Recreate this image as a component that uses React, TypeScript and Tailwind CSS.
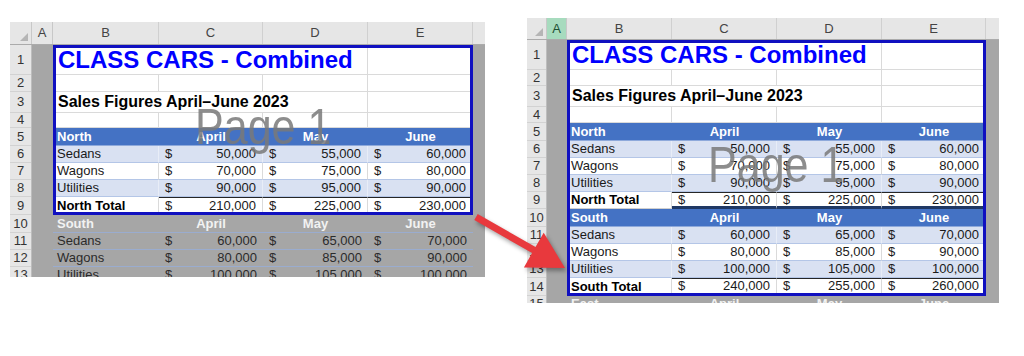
import clsx from "clsx";

type Kind = "title" | "sub" | "blank" | "head" | "data" | "total";

type Row = {
  n: number;
  h: string;
  kind: Kind;
  label?: string;
  vals?: string[];
  light?: boolean;
};

type SheetSpec = {
  box: string;
  headH: string;
  rh: string;
  colA: string;
  cols: string[];
  printRows: Row[];
  outRows: Row[];
  markA?: boolean;
  thickTotal?: boolean;
};

const months = ["April", "May", "June"];

const leftSheet: SheetSpec = {
  box: "w-[475px] h-[255px]",
  headH: "h-[23px]",
  rh: "w-[22px]",
  colA: "w-[21px]",
  cols: ["w-[106px]", "w-[104px]", "w-[105px]", "w-[105px]"],
  printRows: [
    { n: 1, h: "h-[30px]", kind: "title" },
    { n: 2, h: "h-[17px]", kind: "blank" },
    { n: 3, h: "h-[21px]", kind: "sub" },
    { n: 4, h: "h-[15px]", kind: "blank" },
    { n: 5, h: "h-[18px]", kind: "head", label: "North" },
    { n: 6, h: "h-[17px]", kind: "data", label: "Sedans", vals: ["50,000", "55,000", "60,000"], light: true },
    { n: 7, h: "h-[17px]", kind: "data", label: "Wagons", vals: ["70,000", "75,000", "80,000"] },
    { n: 8, h: "h-[17px]", kind: "data", label: "Utilities", vals: ["90,000", "95,000", "90,000"], light: true },
    { n: 9, h: "h-[18px]", kind: "total", label: "North Total", vals: ["210,000", "225,000", "230,000"] },
  ],
  outRows: [
    { n: 10, h: "h-[18px]", kind: "head", label: "South" },
    { n: 11, h: "h-[17px]", kind: "data", label: "Sedans", vals: ["60,000", "65,000", "70,000"] },
    { n: 12, h: "h-[17px]", kind: "data", label: "Wagons", vals: ["80,000", "85,000", "90,000"] },
    { n: 13, h: "h-[17px]", kind: "data", label: "Utilities", vals: ["100,000", "105,000", "100,000"] },
  ],
};

const rightSheet: SheetSpec = {
  box: "w-[472px] h-[285px]",
  headH: "h-[22px]",
  rh: "w-[20px]",
  colA: "w-[20px]",
  cols: ["w-[105px]", "w-[105px]", "w-[105px]", "w-[104px]"],
  markA: true,
  thickTotal: true,
  printRows: [
    { n: 1, h: "h-[30px]", kind: "title" },
    { n: 2, h: "h-[16px]", kind: "blank" },
    { n: 3, h: "h-[21px]", kind: "sub" },
    { n: 4, h: "h-[16px]", kind: "blank" },
    { n: 5, h: "h-[18px]", kind: "head", label: "North" },
    { n: 6, h: "h-[17px]", kind: "data", label: "Sedans", vals: ["50,000", "55,000", "60,000"], light: true },
    { n: 7, h: "h-[17px]", kind: "data", label: "Wagons", vals: ["70,000", "75,000", "80,000"] },
    { n: 8, h: "h-[17px]", kind: "data", label: "Utilities", vals: ["90,000", "95,000", "90,000"], light: true },
    { n: 9, h: "h-[17px]", kind: "total", label: "North Total", vals: ["210,000", "225,000", "230,000"] },
    { n: 10, h: "h-[18px]", kind: "head", label: "South" },
    { n: 11, h: "h-[17px]", kind: "data", label: "Sedans", vals: ["60,000", "65,000", "70,000"], light: true },
    { n: 12, h: "h-[17px]", kind: "data", label: "Wagons", vals: ["80,000", "85,000", "90,000"] },
    { n: 13, h: "h-[17px]", kind: "data", label: "Utilities", vals: ["100,000", "105,000", "100,000"], light: true },
    { n: 14, h: "h-[18px]", kind: "total", label: "South Total", vals: ["240,000", "255,000", "260,000"] },
  ],
  outRows: [{ n: 15, h: "h-[17px]", kind: "head", label: "East" }],
};

function SheetRow({ r, cols, out, thick }: { r: Row; cols: string[]; out?: boolean; thick?: boolean }) {
  const isHead = r.kind === "head";
  const rowBg = out
    ? "bg-[#a6a6a6]"
    : isHead
      ? "bg-[#4472c4]"
      : r.light
        ? "bg-[#d9e1f2]"
        : "bg-white";

  return (
    <div className={clsx("flex shrink-0 text-[13px]", r.h, rowBg)}>
      {cols.map((w, i) => {
        const line = out
          ? "border-b border-[#9aaccf]"
          : r.kind === "data"
            ? clsx("border-b border-[#b4c6e7] border-r", r.light ? "border-r-[#e8edf7]" : "border-r-[#dadada]")
            : isHead
              ? "border-b border-[#8ea9db]"
              : r.kind === "total"
                ? clsx(
                    "border-r border-r-[#dadada]",
                    i > 0 && "border-t border-t-[#262626]",
                    i > 0 && thick ? "border-b-[3px] border-b-[#1f3864]" : "border-b border-b-[#d0d0d0]"
                  )
                : clsx("border-b border-[#dadada]", (r.kind === "blank" || i >= 2) && "border-r");

        return (
          <div key={i} className={clsx("flex shrink-0 items-center whitespace-nowrap", w, line)}>
            {i === 0 && r.kind === "title" && (
              <span className="pl-[5px] text-[24px] font-bold leading-none text-[#0000ff]">CLASS CARS - Combined</span>
            )}
            {i === 0 && r.kind === "sub" && (
              <span className="pl-[5px] text-[16px] font-bold leading-none text-black">Sales Figures April–June 2023</span>
            )}
            {isHead &&
              (i === 0 ? (
                <span className={clsx("pl-[4px] font-bold", out ? "text-[#f2f2f2]" : "text-white")}>{r.label}</span>
              ) : (
                <span className={clsx("w-full text-center font-bold", out ? "text-[#f2f2f2]" : "text-white")}>
                  {months[i - 1]}
                </span>
              ))}
            {(r.kind === "data" || r.kind === "total") &&
              (i === 0 ? (
                <span className={clsx("pl-[4px]", r.kind === "total" ? "font-bold text-black" : out ? "text-[#2b2b2b]" : "text-[#1a1a1a]")}>
                  {r.label}
                </span>
              ) : (
                <div className={clsx("flex w-full justify-between px-[6px]", out ? "text-[#2b2b2b]" : "text-[#1a1a1a]")}>
                  <span>$</span>
                  <span>{r.vals?.[i - 1]}</span>
                </div>
              ))}
          </div>
        );
      })}
    </div>
  );
}

function Sheet({ s }: { s: SheetSpec }) {
  const all = [...s.printRows, ...s.outRows];
  return (
    <div className={clsx("flex flex-col overflow-hidden bg-[#a6a6a6] font-['Liberation_Sans',Arial,sans-serif]", s.box)}>
      {/* column letters */}
      <div className={clsx("flex shrink-0 border-b border-[#ababab] bg-[#e6e6e6] text-[13px] text-[#444]", s.headH)}>
        <div className={clsx("flex shrink-0 items-end justify-end border-r border-[#c8c8c8] pb-[3px] pr-[3px]", s.rh)}>
          <svg width="8" height="8" viewBox="0 0 8 8">
            <path d="M8 0V8H0Z" fill="#b5b5b5" />
          </svg>
        </div>
        <div
          className={clsx(
            "flex shrink-0 items-center justify-center border-r border-[#c8c8c8]",
            s.colA,
            s.markA && "bg-[#a7dbbe] text-[#1d4f33]"
          )}
        >
          A
        </div>
        {["B", "C", "D", "E"].map((c, i) => (
          <div key={c} className={clsx("flex shrink-0 items-center justify-center border-r border-[#d0d0d0]", s.cols[i])}>
            {c}
          </div>
        ))}
        <div className="flex-1" />
      </div>

      <div className="flex min-h-0 flex-1">
        {/* row numbers */}
        <div className={clsx("flex shrink-0 flex-col border-r border-[#bdbdbd] bg-[#e6e6e6] text-[13px] text-[#333]", s.rh)}>
          {all.map((r) => (
            <div key={r.n} className={clsx("flex shrink-0 items-center justify-center border-b border-[#d2d2d2]", r.h)}>
              {r.n}
            </div>
          ))}
        </div>
        <div className={clsx("shrink-0 bg-[#a6a6a6]", s.colA)} />

        <div className="flex shrink-0 flex-col">
          <div className="relative flex flex-col">
            {s.printRows.map((r) => (
              <SheetRow key={r.n} r={r} cols={s.cols} thick={s.thickTotal} />
            ))}
            <div className="pointer-events-none absolute inset-0 flex items-center justify-center">
              <span className="-translate-y-[3px] scale-x-[0.86] text-[50px] leading-none text-[#7a7a7a] opacity-85">Page 1</span>
            </div>
            <div className="pointer-events-none absolute inset-0 border-[3px] border-[#1010c0]" />
          </div>
          {s.outRows.map((r) => (
            <SheetRow key={r.n} r={r} cols={s.cols} out />
          ))}
        </div>

        <div className="flex-1 bg-[#a6a6a6]" />
      </div>
    </div>
  );
}

export default function App() {
  return (
    <div className="relative h-[356px] w-[1024px] overflow-hidden bg-white">
      <div className="flex items-start gap-[42px] pl-[10px] pt-[18px]">
        <div className="mt-[4px]">
          <Sheet s={leftSheet} />
        </div>
        <Sheet s={rightSheet} />
      </div>

      {/* red arrow pointing from the cut-off page to the fixed one */}
      <svg
        className="pointer-events-none absolute left-0 top-0 drop-shadow-[2px_3px_2px_rgba(0,0,0,0.35)]"
        width="1024"
        height="356"
        viewBox="0 0 1024 356"
      >
        <polygon
          points="477.7,214 535.5,247.1 543.7,232.8 565,268 523.9,267.4 532.1,253.1 474.3,220"
          fill="#e8393d"
        />
      </svg>
    </div>
  );
}
